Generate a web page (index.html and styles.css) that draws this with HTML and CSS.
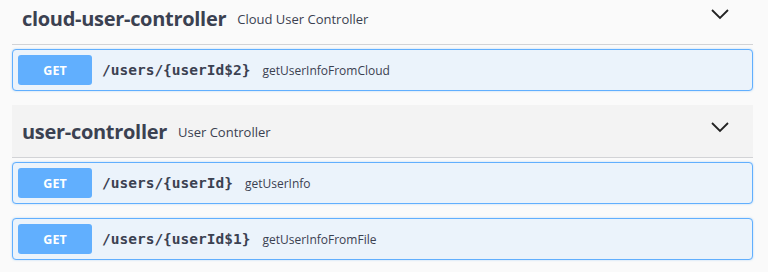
FILE: index.html
```html
<!DOCTYPE html>
<html>
<head>
<meta charset="utf-8">
<link rel="stylesheet" href="styles.css">
</head>
<body>
<div class="wrapper">
  <section class="tag-section">
    <h3 class="tag">
      <span class="tag-name">cloud-user-controller</span>
      <small class="tag-desc">Cloud User Controller</small>
      <svg class="chevron" width="20" height="20" viewBox="0 0 20 20"><path d="M2 6 L10 14 L18 6" fill="none" stroke="#222" stroke-width="1.8"/></svg>
    </h3>
    <div class="ops">
      <div class="opblock">
        <span class="method">GET</span>
        <span class="path">/users/{userId$2}</span>
        <span class="op-desc">getUserInfoFromCloud</span>
      </div>
    </div>
  </section>
  <section class="tag-section">
    <h3 class="tag tag-hover">
      <span class="tag-name">user-controller</span>
      <small class="tag-desc">User Controller</small>
      <svg class="chevron" width="20" height="20" viewBox="0 0 20 20"><path d="M2 6 L10 14 L18 6" fill="none" stroke="#222" stroke-width="1.8"/></svg>
    </h3>
    <div class="ops">
      <div class="opblock">
        <span class="method">GET</span>
        <span class="path">/users/{userId}</span>
        <span class="op-desc">getUserInfo</span>
      </div>
      <div class="opblock">
        <span class="method">GET</span>
        <span class="path">/users/{userId$1}</span>
        <span class="op-desc">getUserInfoFromFile</span>
      </div>
    </div>
  </section>
</div>
</body>
</html>
```

FILE: styles.css
```css
html, body {
  margin: 0;
  padding: 0;
  background: #fafafa;
  font-family: "Open Sans", sans-serif;
  color: #3b4151;
}
.wrapper {
  margin: -8px 15px 0 12px;
}
.tag {
  margin: 0 0 4px;
  height: 32px;
  padding: 10px 23px 10px 10px;
  display: flex;
  align-items: center;
  border-bottom: 1px solid #d2d3d6;
}
.tag-hover {
  background: #f3f3f3;
}
.tag-name {
  font-size: 20px;
  font-weight: 700;
  letter-spacing: -0.3px;
  color: #3b4151;
}
.tag-desc {
  font-size: 13px;
  font-weight: 400;
  margin-left: 11px;
  flex: 1;
  padding-top: 2px;
}
.chevron {
  display: block;
  margin-top: -8px;
}
.ops {
  display: flex;
  flex-direction: column;
  gap: 14px;
  margin-bottom: 14px;
}
.opblock {
  height: 30px;
  padding: 5px;
  border: 1px solid #61affe;
  border-radius: 4px;
  background: #ebf3fb;
  box-shadow: 0 0 2px rgba(97, 175, 254, 0.5);
  display: flex;
  align-items: center;
}
.method {
  width: 74px;
  height: 30px;
  border-radius: 3px;
  background: #61affe;
  color: #fff;
  font-weight: 700;
  font-size: 12.5px;
  display: flex;
  align-items: center;
  justify-content: center;
}
.path {
  margin-left: 10px;
  font-family: "DejaVu Sans Mono", monospace;
  font-weight: 700;
  font-size: 14.5px;
  color: #3b4151;
}
.op-desc {
  margin-left: 12px;
  font-size: 12px;
  color: #3b4151;
}
```
